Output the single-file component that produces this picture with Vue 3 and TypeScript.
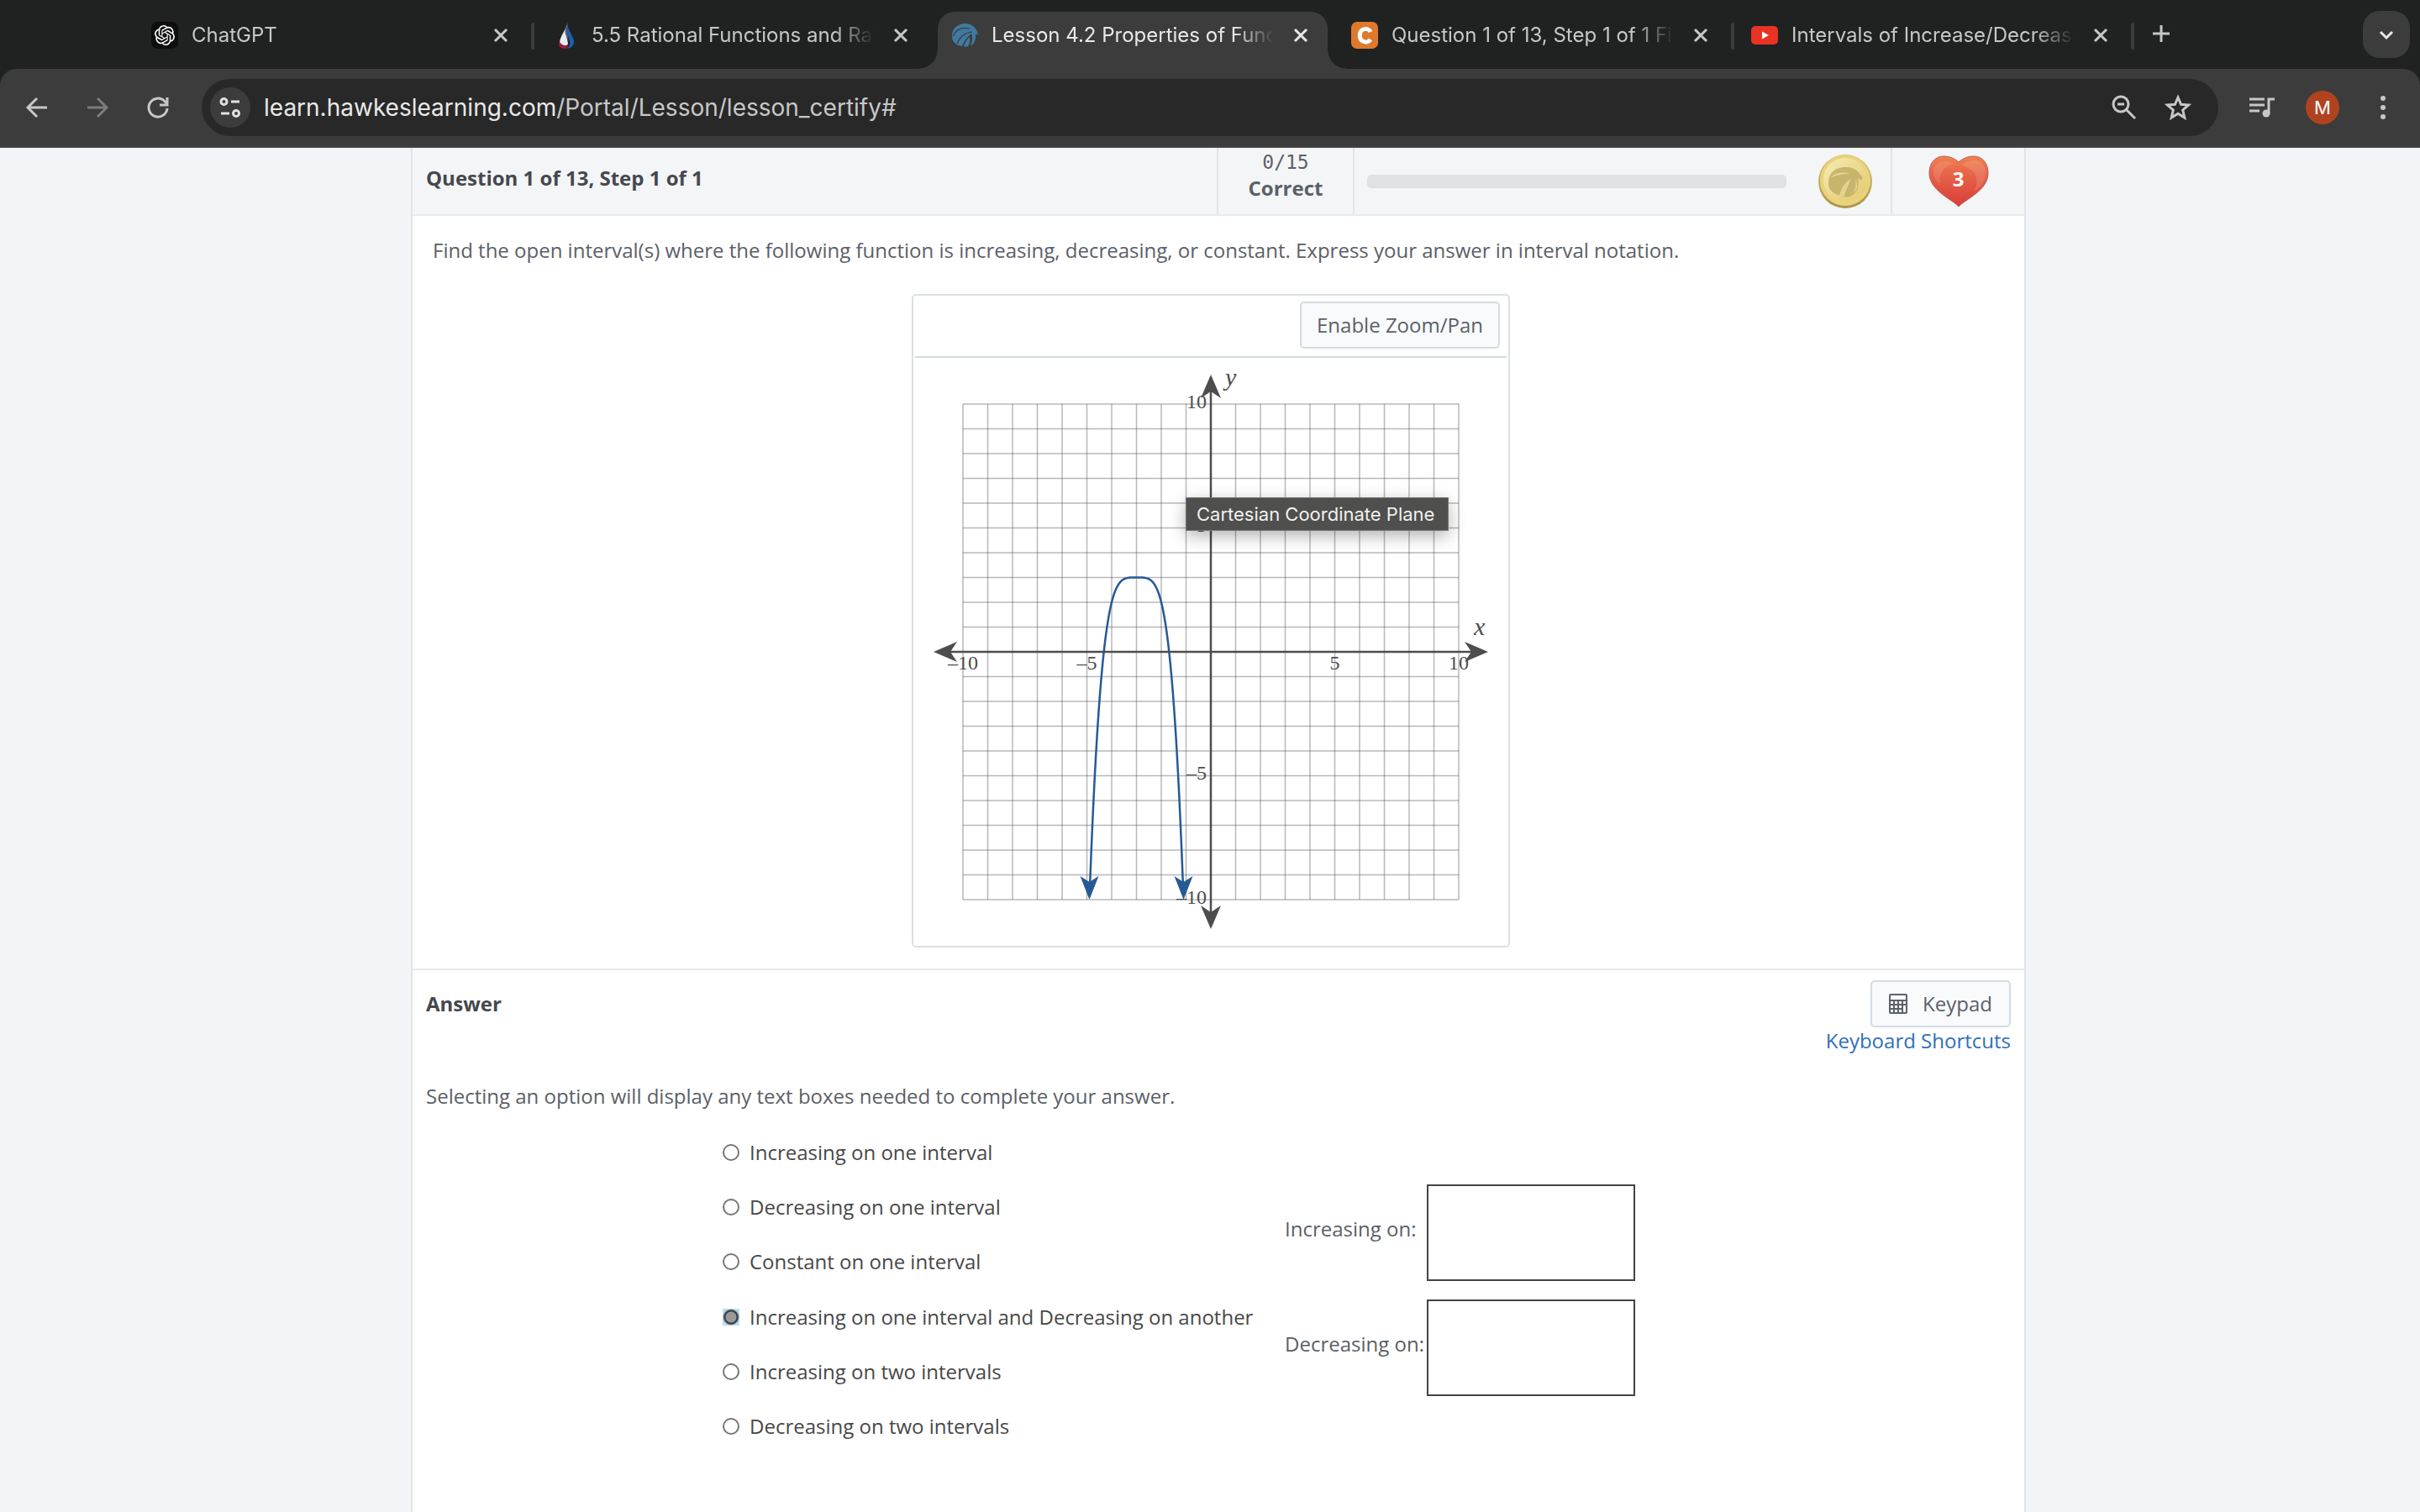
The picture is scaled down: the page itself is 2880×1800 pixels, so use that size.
<script setup lang="ts">
import { ref } from 'vue'

interface Tab {
  title: string
  icon: 'chatgpt' | 'flame' | 'hawk' | 'chegg' | 'youtube'
  active?: boolean
  divider?: boolean
}

const tabs: Tab[] = [
  { title: 'ChatGPT', icon: 'chatgpt', divider: true },
  { title: '5.5 Rational Functions and Rational', icon: 'flame' },
  { title: 'Lesson 4.2 Properties of Functions', icon: 'hawk', active: true },
  { title: 'Question 1 of 13, Step 1 of 1 Find', icon: 'chegg', divider: true },
  { title: 'Intervals of Increase/Decrease', icon: 'youtube', divider: true },
]

const options: string[] = [
  'Increasing on one interval',
  'Decreasing on one interval',
  'Constant on one interval',
  'Increasing on one interval and Decreasing on another',
  'Increasing on two intervals',
  'Decreasing on two intervals',
]
const selected = ref<string>(options[3])
const increasing = ref<string>('')
const decreasing = ref<string>('')

// Plot geometry: the origin and the length of one unit inside the svg view box
const unit = 29.5
const ox = 352
const oy = 350
const px = (x: number): number => ox + x * unit
const py = (y: number): number => oy - y * unit
const ticks: number[] = Array.from({ length: 21 }, (_, i) => i - 10)

// y = 3 - (x + 3)^4, drawn down to the lower edge of the grid
const reach = Math.pow(13, 0.25)
const samples = 120
const curve: string = Array.from({ length: samples + 1 }, (_, i) => {
  const d = -reach + (2 * reach * i) / samples
  const y = Math.max(-9.6, 3 - Math.pow(d, 4))
  return `${px(d - 3).toFixed(2)},${py(y).toFixed(2)}`
}).join(' ')
const curveEnds: number[] = [px(-3 - reach), px(-3 + reach)]
</script>

<template>
  <div class="page">
    <header class="browser">
      <div class="strip">
        <div v-for="tab in tabs" :key="tab.title" class="tab" :class="{ active: tab.active, divider: tab.divider }">
          <span v-if="tab.active" class="tab-shape"></span>
          <svg v-if="tab.icon === 'chatgpt'" class="favicon" viewBox="0 0 32 32">
            <rect width="32" height="32" rx="7" fill="#0d0d0d" />
            <path transform="translate(4 4)" fill="#fff" d="M22.2819 9.8211a5.9847 5.9847 0 0 0-.5157-4.9108 6.0462 6.0462 0 0 0-6.5098-2.9A6.0651 6.0651 0 0 0 4.9807 4.1818a5.9847 5.9847 0 0 0-3.9977 2.9 6.0462 6.0462 0 0 0 .7427 7.0966 5.98 5.98 0 0 0 .511 4.9107 6.051 6.051 0 0 0 6.5146 2.9001A5.9847 5.9847 0 0 0 13.2599 24a6.0557 6.0557 0 0 0 5.7718-4.2058 5.9894 5.9894 0 0 0 3.9977-2.9001 6.0557 6.0557 0 0 0-.7475-7.0729zm-9.022 12.6081a4.4755 4.4755 0 0 1-2.8764-1.0408l.1419-.0804 4.7783-2.7582a.7948.7948 0 0 0 .3927-.6813v-6.7369l2.02 1.1686a.071.071 0 0 1 .038.052v5.5826a4.504 4.504 0 0 1-4.4945 4.4944zm-9.6607-4.1254a4.4708 4.4708 0 0 1-.5346-3.0137l.142.0852 4.783 2.7582a.7712.7712 0 0 0 .7806 0l5.8428-3.3685v2.3324a.0804.0804 0 0 1-.0332.0615L9.74 19.9502a4.4992 4.4992 0 0 1-6.1408-1.6464zM2.3408 7.8956a4.485 4.485 0 0 1 2.3655-1.9728V11.6a.7664.7664 0 0 0 .3879.6765l5.8144 3.3543-2.0201 1.1685a.0757.0757 0 0 1-.071 0l-4.8303-2.7865A4.504 4.504 0 0 1 2.3408 7.872zm16.5963 3.8558L13.1038 8.364 15.1192 7.2a.0757.0757 0 0 1 .071 0l4.8303 2.7913a4.4944 4.4944 0 0 1-.6765 8.1042v-5.6772a.79.79 0 0 0-.407-.667zm2.0107-3.0231l-.142-.0852-4.7735-2.7818a.7759.7759 0 0 0-.7854 0L9.409 9.2297V6.8974a.0662.0662 0 0 1 .0284-.0615l4.8303-2.7866a4.4992 4.4992 0 0 1 6.6802 4.66zM8.3065 12.863l-2.02-1.1638a.0804.0804 0 0 1-.038-.0567V6.0742a4.4992 4.4992 0 0 1 7.3757-3.4537l-.142.0805L8.704 5.459a.7948.7948 0 0 0-.3927.6813zm1.0976-2.3654l2.602-1.4998 2.6069 1.4998v2.9994l-2.5974 1.4997-2.6067-1.4997Z" />
          </svg>
          <svg v-else-if="tab.icon === 'flame'" class="favicon" viewBox="0 0 32 32">
            <path fill="#1d5fb0" d="M19.500 1C18 8 27 17 27 24C27 29 22 32 17 32C21 31 23 28 22 23C21 17 16 12 19.500 1Z" />
            <path fill="#e9edf0" d="M19.500 1C17 10 11 17 10 24C11 28 19 30 20 26C20 20 15 16 19.500 1Z" />
            <path fill="#5c6468" d="M19.500 1C16 8 16 12 17 15C19 18 20 21 20 25C22 17 16 12 19.500 1Z" />
            <path fill="#a01c3c" d="M10 23C7 28 11 32 16 32C18 32 20 30 20 28C15 29 11 27 10 23Z" />
          </svg>
          <svg v-else-if="tab.icon === 'hawk'" class="favicon" viewBox="0 0 32 32">
            <path fill="#41799f" d="M1 18C0 8 8 2 17 2C24 2 31 7 32 16L29 14C30 21 27 27 23 29C25 23 26 18 24 14C19 18 15 23 13 29C6 28 1 24 1 18Z" />
            <path fill="none" stroke="#3c3c3c" stroke-width="1.200" d="M2 17C6 9 13 6 22 8M7 26C11 17 16 13 25 12" />
            <path fill="#41799f" d="M15 29C17 23 20 19 22 18C23 22 22 26 20 29C18 30 16 30 15 29Z" />
          </svg>
          <svg v-else-if="tab.icon === 'chegg'" class="favicon" viewBox="0 0 32 32">
            <rect width="32" height="32" rx="7" fill="#df7a2d" />
            <path fill="none" stroke="#fff" stroke-width="5" d="M23 12C21 8 17 8 14.500 9C9 11 9 21 14 23C17 25 21 24 23 21" />
          </svg>
          <svg v-else class="favicon" viewBox="0 0 32 32">
            <rect y="5" width="32" height="22" rx="5" fill="#e93323" />
            <path fill="#fff" d="M13 11.500L21 16L13 20.500Z" />
          </svg>
          <span class="tab-title">{{ tab.title }}</span>
          <button class="icon-button tab-close" type="button" aria-label="Close tab">
            <svg viewBox="0 0 32 32" width="32" height="32"><path d="M9 9L23 23M23 9L9 23" /></svg>
          </button>
        </div>
        <button class="icon-button new-tab" type="button" aria-label="New tab">
          <svg viewBox="0 0 32 32" width="32" height="32"><path d="M16 5V25M6 15H26" /></svg>
        </button>
        <button class="icon-button tab-search" type="button" aria-label="Search tabs">
          <svg viewBox="0 0 32 32" width="32" height="32"><path d="M9 13L16 20L23 13" /></svg>
        </button>
      </div>

      <div class="toolbar">
        <button class="icon-button" type="button" aria-label="Back">
          <svg viewBox="0 0 32 32" width="32" height="32"><path d="M28 16H6M16 5L5 16L16 27" /></svg>
        </button>
        <button class="icon-button muted" type="button" aria-label="Forward">
          <svg viewBox="0 0 32 32" width="32" height="32"><path d="M4 16H26M16 5L27 16L16 27" /></svg>
        </button>
        <button class="icon-button" type="button" aria-label="Reload">
          <svg viewBox="0 0 32 32" width="32" height="32"><path d="M27 17A11 11 0 1 1 24 8.500L27 12" /><path d="M27 4V13H18" /></svg>
        </button>
        <div class="omnibox">
          <button class="icon-button site-info" type="button" aria-label="View site information">
            <svg viewBox="0 0 32 32" width="32" height="32"><circle cx="8.500" cy="9" r="3.500" /><path d="M17 9H27M5 23H15" /><circle cx="23" cy="23" r="3.500" /></svg>
          </button>
          <span class="url"><span class="host">learn.hawkeslearning.com</span>/Portal/Lesson/lesson_certify#</span>
          <button class="icon-button" type="button" aria-label="Zoom">
            <svg viewBox="0 0 32 32" width="32" height="32"><circle cx="12" cy="12" r="9" /><path d="M8 12H16M18.500 18.500L29 29" /></svg>
          </button>
          <button class="icon-button" type="button" aria-label="Bookmark this tab">
            <svg viewBox="0 0 32 32" width="32" height="32"><path d="M16 4L19.600 12.300L28.500 13L21.700 19L23.800 28L16 23.200L8.200 28L10.300 19L3.500 13L12.400 12.300Z" /></svg>
          </button>
        </div>
        <button class="icon-button media" type="button" aria-label="Media controls">
          <svg viewBox="0 0 32 32" width="32" height="32"><path d="M1 6H19M1 13H19M1 20H13M24 24V6H31" /><circle class="solid" cx="21" cy="23" r="4.500" /></svg>
        </button>
        <button class="avatar" type="button">M</button>
        <button class="icon-button" type="button" aria-label="Menu">
          <svg viewBox="0 0 32 32" width="32" height="32"><g class="solid"><circle cx="16" cy="5" r="3" /><circle cx="16" cy="16" r="3" /><circle cx="16" cy="27" r="3" /></g></svg>
        </button>
      </div>
    </header>

    <main class="content">
      <div class="panel">
        <div class="status">
          <h1 class="heading status-title">Question 1 of 13, Step 1 of 1</h1>
          <div class="score">
            <span class="count">0/15</span>
            <strong>Correct</strong>
          </div>
          <div class="progress">
            <div class="track"></div>
            <svg class="coin" viewBox="0 0 64 64">
              <defs>
                <linearGradient id="coin-face" x1="0" y1="0" x2="1" y2="1">
                  <stop offset="0" stop-color="#f6ecb4" />
                  <stop offset="1" stop-color="#e4c86c" />
                </linearGradient>
                <linearGradient id="coin-edge" x1="0" y1="0" x2="0" y2="1">
                  <stop offset="0" stop-color="#d8c878" />
                  <stop offset="1" stop-color="#a89448" />
                </linearGradient>
              </defs>
              <circle cx="32" cy="32" r="32" fill="url(#coin-edge)" />
              <circle cx="32" cy="31" r="30" fill="#ead37c" />
              <circle cx="32" cy="30" r="26" fill="url(#coin-face)" />
              <path fill="#c8b56c" d="M12 34C12 21 21 15 32 15C42 14 48 20 50 24C53 26 53 30 51 31L47 28C49 38 46 46 39 49C36 51 30 51 26 49C18 47 12 42 12 34Z" />
              <path fill="#e6d48c" d="M14 28C20 21 28 20 39 23C28 23 20 25 14 28ZM25 49C27 40 32 33 38 29C37 36 32 41 31 50ZM42 45C45 39 45 33 43 29C48 34 47 42 42 45Z" />
            </svg>
          </div>
          <div class="lives">
            <svg class="heart" viewBox="0 0 72 62">
              <defs>
                <linearGradient id="heart-fill" x1="0" y1="0" x2="0" y2="1">
                  <stop offset="0" stop-color="#f0824f" />
                  <stop offset="0.400" stop-color="#e66048" />
                  <stop offset="1" stop-color="#d83f38" />
                </linearGradient>
              </defs>
              <path fill="url(#heart-fill)" stroke="#b8605a" stroke-width="1" d="M36 61C28 52 1 42 1 21C1 8 9 1 18 1C27 1 33 5 36 8C39 5 45 1 54 1C63 1 71 8 71 21C71 42 44 52 36 61Z" />
              <path fill="#fff" fill-opacity="0.120" d="M40 12C48 2 66 4 68 18C69 32 60 40 54 43C62 30 56 16 40 12ZM6 20C6 8 20 4 30 10C20 12 12 20 14 34C9 30 6 26 6 20Z" />
            </svg>
            <span class="lives-count">3</span>
          </div>
        </div>

        <section class="question">
          <p class="prompt">Find the open interval(s) where the following function is increasing, decreasing, or constant. Express your answer in interval notation.</p>
          <div class="graph">
            <div class="graph-bar">
              <button class="button" type="button">Enable Zoom/Pan</button>
            </div>
            <svg class="plot" viewBox="0 0 704 700" role="img">
              <g class="grid">
                <line v-for="t in ticks" :key="'v' + t" :x1="px(t)" :x2="px(t)" :y1="py(10)" :y2="py(-10)" />
                <line v-for="t in ticks" :key="'h' + t" :x1="px(-10)" :x2="px(10)" :y1="py(t)" :y2="py(t)" />
              </g>
              <g class="tick">
                <text :x="px(-10)" y="371" text-anchor="middle">–10</text>
                <text :x="px(-5)" y="371" text-anchor="middle">–5</text>
                <text :x="px(5)" y="371" text-anchor="middle">5</text>
                <text :x="px(10)" y="371" text-anchor="middle">10</text>
                <text x="347" y="60" text-anchor="end">10</text>
                <text x="347" y="207" text-anchor="end">5</text>
                <text x="347" y="502" text-anchor="end">–5</text>
                <text x="347" y="650" text-anchor="end">–10</text>
                <text class="axis-name" x="369" y="33">y</text>
                <text class="axis-name" x="665" y="330">x</text>
              </g>
              <polyline class="curve" :points="curve" />
              <path v-for="end in curveEnds" :key="end" class="curve-tip" :d="`M${end} 645l-11 -28l11 7l11 -7z`" />
              <g class="axis">
                <line :x1="ox" :x2="ox" y1="32" y2="668" />
                <line :y1="oy" :y2="oy" x1="35" x2="670" />
                <path :d="`M${ox} 20l-12 28l12 -8l12 8z`" />
                <path :d="`M${ox} 680l-12 -28l12 8l12 -8z`" />
                <path :d="`M22 ${oy}l28 -12l-8 12l8 12z`" />
                <path :d="`M682 ${oy}l-28 -12l8 12l-8 12z`" />
              </g>
            </svg>
            <div class="tooltip" role="tooltip">Cartesian Coordinate Plane</div>
          </div>
        </section>

        <section class="answer">
          <div class="answer-head">
            <h2 class="heading">Answer</h2>
            <div class="tools">
              <button class="button keypad" type="button">
                <svg viewBox="0 0 22 24" width="22" height="24">
                  <rect width="22" height="24" rx="2" fill="#5c6269" />
                  <rect x="2" y="2" width="18" height="5" fill="#f8fafb" />
                  <path fill="#f8fafb" d="M2 9h3v3H2zM7 9h3v3H7zM12 9h3v3h-3zM17 9h3v3h-3zM2 14h3v3H2zM7 14h3v3H7zM12 14h3v3h-3zM2 19h3v3H2zM7 19h3v3H7zM12 19h3v3h-3zM17 14h3v8h-3z" />
                </svg>
                Keypad
              </button>
              <a class="shortcuts" href="#">Keyboard Shortcuts</a>
            </div>
          </div>
          <p class="hint">Selecting an option will display any text boxes needed to complete your answer.</p>
          <div class="form">
            <div class="options">
              <label v-for="option in options" :key="option" class="option">
                <input v-model="selected" type="radio" name="behaviour" :value="option" />
                <span>{{ option }}</span>
              </label>
            </div>
            <div class="fields">
              <label for="increasing">Increasing on:</label>
              <input id="increasing" v-model="increasing" type="text" />
              <label for="decreasing">Decreasing on:</label>
              <input id="decreasing" v-model="decreasing" type="text" />
            </div>
          </div>
        </section>
      </div>
    </main>
  </div>
</template>

<style>
body {
  margin: 0;
  background: #f3f4f7;
}
</style>

<style scoped>
* {
  box-sizing: border-box;
}
.page {
  display: flex;
  flex-direction: column;
  min-height: 100vh;
  font-family: "Open Sans", "Noto Sans", sans-serif;
  font-size: 24px;
  line-height: 32px;
  color: #5b6068;
}
h1,
h2,
p {
  margin: 0;
}
button {
  font: inherit;
  color: inherit;
}

/* Browser chrome */
.browser {
  background: #202222;
  font-family: Inter, Roboto, sans-serif;
  color: #c7c7c7;
}
.strip {
  display: flex;
  align-items: center;
  height: 82px;
  padding: 0 12px 0 158px;
}
.tab {
  position: relative;
  display: flex;
  align-items: center;
  gap: 16px;
  flex: 0 1 476px;
  min-width: 0;
  height: 82px;
  padding: 2px 22px 0;
}
.tab.divider::after {
  content: "";
  position: absolute;
  right: -2px;
  top: 27px;
  width: 4px;
  height: 32px;
  border-radius: 2px;
  background: #3c3c3c;
}
.tab.active {
  color: #e8e8e8;
}
.tab-shape {
  position: absolute;
  inset: 14px 6px 0;
  border-radius: 20px 20px 0 0;
  background: #3c3c3c;
}
.tab-shape::before,
.tab-shape::after {
  content: "";
  position: absolute;
  bottom: 0;
  width: 22px;
  height: 22px;
}
.tab-shape::before {
  right: 100%;
  background: radial-gradient(circle at 0 0, #202222 21px, #3c3c3c 22px);
}
.tab-shape::after {
  left: 100%;
  background: radial-gradient(circle at 100% 0, #202222 21px, #3c3c3c 22px);
}
.favicon {
  position: relative;
  flex: none;
  width: 32px;
  height: 32px;
}
.tab-title {
  position: relative;
  flex: 1;
  min-width: 0;
  overflow: hidden;
  white-space: nowrap;
  mask-image: linear-gradient(90deg, #000 calc(100% - 48px), transparent);
}
.icon-button {
  position: relative;
  display: flex;
  align-items: center;
  justify-content: center;
  flex: none;
  width: 32px;
  height: 32px;
  padding: 0;
  border: 0;
  background: none;
}
.icon-button svg {
  fill: none;
  stroke: currentColor;
  stroke-width: 3;
}
.icon-button .solid {
  fill: currentColor;
  stroke: none;
}
.muted {
  color: #7c7c7c;
}
.new-tab {
  margin-left: 18px;
}
.tab-search {
  width: 56px;
  height: 56px;
  margin-left: auto;
  border-radius: 20px;
  background: #3c3c3c;
  color: #e8e8e8;
}
.toolbar {
  display: flex;
  align-items: center;
  gap: 36px;
  height: 94px;
  padding: 0 28px;
  border-bottom: 2px solid #474546;
  border-radius: 20px 20px 0 0;
  background: #3c3c3c;
}
.toolbar > .icon-button:nth-child(2),
.toolbar > .icon-button:nth-child(3) {
  margin-left: 4px;
}
.omnibox {
  display: flex;
  align-items: center;
  flex: 1;
  gap: 32px;
  height: 68px;
  padding: 0 32px 0 10px;
  border-radius: 34px;
  background: #282828;
}
.site-info {
  width: 48px;
  height: 48px;
  border-radius: 50%;
  background: #3c3c3c;
  color: #e0e0e0;
}
.url {
  flex: 1;
  margin-left: -16px;
  font-size: 28px;
}
.host {
  color: #e8e8e8;
}
.avatar {
  width: 40px;
  height: 40px;
  padding: 0;
  border: 0;
  border-radius: 50%;
  background: #b1421f;
  color: #fff;
  font-size: 22px;
}

/* Lesson panel */
.content {
  display: flex;
  flex: 1;
  justify-content: center;
  padding-left: 20px;
  background: #f3f4f7;
}
.panel {
  flex: 0 1 1922px;
  border: solid #e1e4e8;
  border-width: 0 2px;
  background: #fff;
}
.heading {
  font-size: 24px;
  font-weight: 700;
  color: #45484d;
}
.status {
  display: flex;
  height: 81px;
  border-bottom: 2px solid #e8e9eb;
  background: #f4f5f7;
}
.status > * + * {
  border-left: 2px solid #e1e4e8;
}
.status-title {
  flex: 1;
  padding: 20px 16px;
}
.score {
  display: flex;
  flex-direction: column;
  align-items: center;
  width: 162px;
}
.count {
  padding-top: 2px;
  font-family: "DejaVu Sans Mono", monospace;
  font-size: 23px;
  line-height: 30px;
}
.progress {
  display: flex;
  align-items: center;
  gap: 38px;
  flex: 0 1 640px;
  padding: 0 22px 0 15px;
}
.track {
  flex: 1;
  height: 16px;
  border-radius: 5px;
  background: #dfe1e5;
}
.coin {
  flex: none;
  width: 64px;
  height: 64px;
}
.lives {
  display: grid;
  place-items: center;
  width: 159px;
}
.lives > * {
  grid-area: 1 / 1;
}
.heart {
  width: 72px;
  height: 62px;
}
.lives-count {
  font-weight: 700;
  color: #fff;
  padding-bottom: 6px;
}

.question {
  display: flex;
  flex-direction: column;
  gap: 36px;
  padding: 25px 42px 25px 24px;
  border-bottom: 2px solid #e6e7e9;
}
.graph {
  position: relative;
  align-self: center;
  width: 712px;
  padding: 0 2px;
  border: 2px solid #dae0e5;
  border-radius: 5px;
}
.graph-bar {
  display: flex;
  justify-content: flex-end;
  padding: 7px 8px 9px;
  border-bottom: 2px solid #d3dade;
}
.button {
  display: flex;
  align-items: center;
  height: 56px;
  padding: 0 18px;
  border: 2px solid #d3dce3;
  border-radius: 5px;
  background: #f8fafb;
}
.plot {
  display: block;
  width: 100%;
}
.grid line {
  stroke: #4d4d4d;
  stroke-opacity: 0.4;
  stroke-width: 1.5;
}
.tick text {
  font-family: "Liberation Serif", serif;
  font-size: 24px;
  fill: #4d4d4d;
}
.tick .axis-name {
  font-size: 30px;
  font-style: italic;
}
.curve {
  fill: none;
  stroke: #265a96;
  stroke-width: 2.5;
}
.curve-tip {
  fill: #265a96;
}
.axis line {
  stroke: #4d4d4d;
  stroke-width: 2.5;
}
.axis path {
  fill: #4d4d4d;
}
.tooltip {
  position: absolute;
  left: 324px;
  top: 240px;
  padding: 3px 16px 3px 12px;
  border: 1px solid #797979;
  background: #4f4f4d;
  box-shadow: 0 6px 20px rgba(0, 0, 0, 0.3);
  font-family: Inter, Roboto, sans-serif;
  font-size: 22px;
  color: #f0f0f0;
  white-space: nowrap;
}

.answer {
  padding: 12px 16px;
}
.answer-head {
  display: flex;
  justify-content: space-between;
}
.answer-head .heading {
  padding-top: 12px;
}
.tools {
  display: flex;
  flex-direction: column;
  align-items: flex-end;
}
.keypad {
  gap: 18px;
  padding: 0 20px;
}
.shortcuts {
  color: #2f6fb8;
  text-decoration: none;
}
.hint {
  padding-top: 34px;
}
.form {
  display: flex;
  padding: 18px 0 0 353px;
}
.options {
  display: grid;
  grid-auto-rows: 1fr;
  flex: 0 0 669px;
  height: 392px;
  color: #484848;
}
.option {
  display: flex;
  align-items: center;
  gap: 12px;
}
.option input {
  appearance: none;
  flex: none;
  width: 20px;
  height: 20px;
  margin: 0;
  border: 2px solid #767676;
  border-radius: 50%;
  background: #fff;
}
.option input:checked {
  border: 0;
  border-radius: 0;
  background: radial-gradient(circle, #999 6px, #3a3d40 7px, #3a3d40 8px, #7f98a6 9px, #b9def2 10px);
}
.fields {
  display: grid;
  grid-template-columns: 169px 248px;
  align-content: start;
  align-items: center;
  row-gap: 22px;
  padding-top: 71px;
}
.fields label {
  padding-bottom: 10px;
  white-space: nowrap;
}
.fields input {
  width: 248px;
  height: 115px;
  padding: 0 12px;
  border: 2px solid #444;
  background: #fff;
  font: inherit;
}
</style>
